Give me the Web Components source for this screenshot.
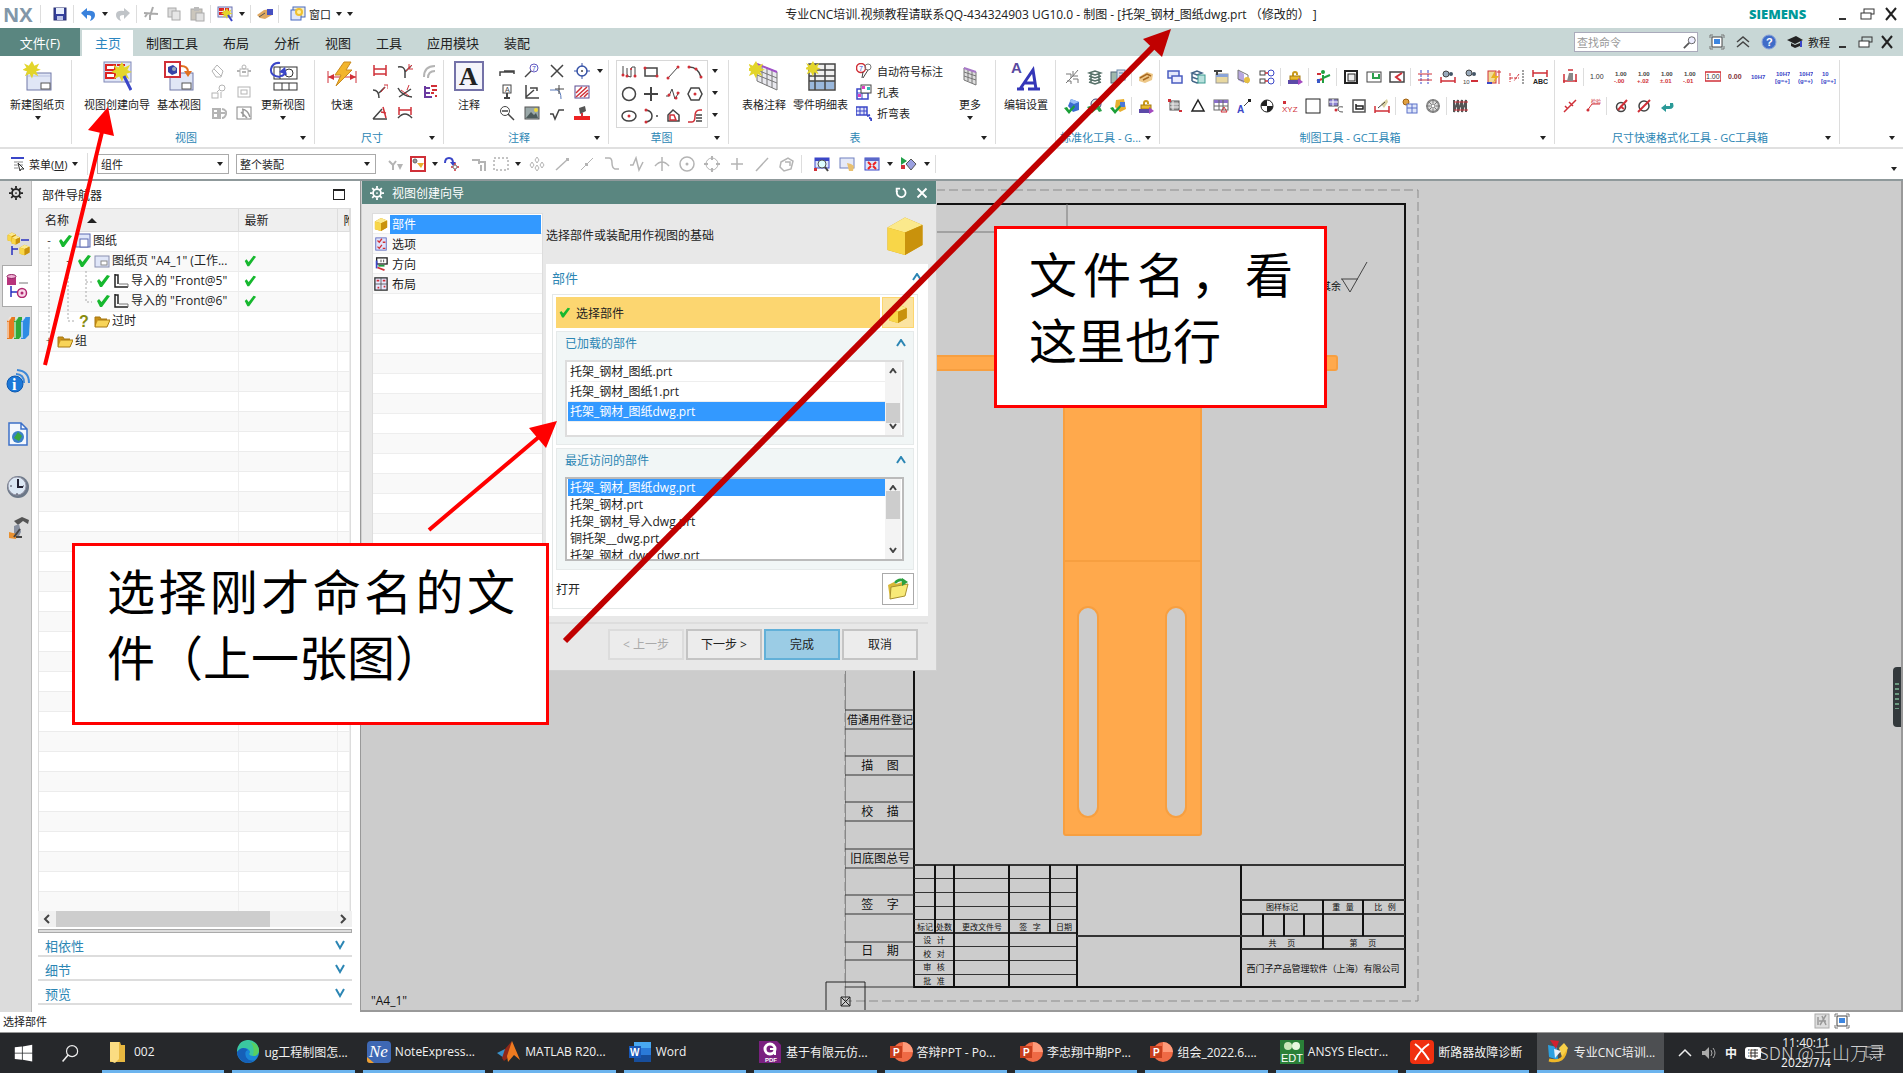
<!DOCTYPE html>
<html lang="zh-CN">
<head>
<meta charset="utf-8">
<title>NX - 制图</title>
<style>
  body {
    margin: 0;
    font-family: "Open Sans", "Noto Sans CJK SC", sans-serif;
    font-size: 12px;
    color: #222;
    overflow: hidden;
  }
</style>
</head>
<body>
<nx-app></nx-app>

<script>
// ---------- icons ----------
const G = '#b4b4b4', K = '#444', R = '#d03038', B = '#3a46c8';
const s = (d, c = K, w = 1, extra = '') => `<path d="${d}" fill="none" stroke="${c}" stroke-width="${w}" ${extra}/>`;
const f = (d, c) => `<path d="${d}" fill="${c}"/>`;
const r = (x, y, w, h, c = 'none', st = 'none', sw = 1) => `<rect x="${x}" y="${y}" width="${w}" height="${h}" fill="${c}" stroke="${st}" stroke-width="${sw}"/>`;
const c = (x, y, q, fill = 'none', st = 'none', sw = 1) => `<circle cx="${x}" cy="${y}" r="${q}" fill="${fill}" stroke="${st}" stroke-width="${sw}"/>`;
const t = (x, y, str, col = K, size = 7, extra = '') => `<text x="${x}" y="${y}" fill="${col}" font-size="${size}" font-family="Liberation Sans, sans-serif" ${extra}>${str}</text>`;
const star = (x, y, q) => f(`M${x} ${y - q}l${q * .3} ${q * .6} ${q * .6}-${q * .3}-${q * .3} ${q * .6} ${q * .5} ${q * .2}-${q * .6} ${q * .2} ${q * .3} ${q * .6}-${q * .6}-${q * .3}-${q * .2} ${q * .6}-${q * .3}-${q * .6}-${q * .6} ${q * .3} ${q * .3}-${q * .6}-${q * .6}-${q * .2} ${q * .5}-${q * .3}-${q * .3}-${q * .5} ${q * .6} ${q * .3}z`, '#e3d52a');
const cube = k => `<g transform="scale(${k})">${f('M1 5 8 1l7 3v8l-7 4-7-2z', '#d8a210')}${f('M1 5l7-4 7 3-7 3z', '#fbe98c')}${f('M1 5l7 2v9l-7-2z', '#f8d648')}${f('M8 7l7-3v8l-7 4z', '#c9920c')}</g>`;
const check = f('M2 8l2-2 2.500 3L12 2l3 1-8 11H5z', '#17b82f');
const lock = f('M5 9V5q0-3 3-3t3 3v1H9V5q0-1-1-1t-1 1v4z', '#c99a1c') + r(3, 7, 10, 4, '#e8b92e', '#a57a10') + r(1, 11, 11, 4, '#5c4aa8') + f('M11 9l5 4-5 3z', '#a34ac0');
const screen = s('M1 4V1h3M12 1h3v3M15 12v3h-3M4 15H1v-3', '#777', 1) + r(3, 3, 10, 10, '#fff', '#444') + r(5, 5, 6, 5, '#3c86e0');
const ppt = c(14, 12, 10, '#ef6a45') + f('M14 2a10 10 0 0 1 10 10H14z', '#ff9b7a') + r(1, 6, 12, 12, '#c8401e') + t(4, 16, 'P', '#fff', 10, 'font-weight="bold"');
const tol = (a, b, cc = K, d = R) => t(2, 7, a, cc, 6, 'font-weight="bold"') + t(1, 14, b, d, 6, 'font-weight="bold"');

const ICONS = {
  save: r(2, 2, 12, 12, '#34409c', '#2a3070') + r(4, 2, 8, 6, '#e8eefc') + r(5, 10, 6, 4, '#bcc4e8'),
  undo: f('M1 7l6-5v3q8-1 8 4 0 4-5 6 2-3 1-5-1-1-4-1v4z', '#3a82dc'),
  redo: f('M15 7L9 2v3q-8-1-8 4 0 4 5 6-2-3-1-5 1-1 4-1v4z', '#c0c4c8'),
  cut: s('M10 1L7 10M1 7l14 1M4 8l-2 3M7 9v5', '#aaa', 2),
  copy: r(2, 2, 8, 9, '#ddd', '#aaa') + r(6, 5, 8, 9, '#e6e6e6', '#aaa'),
  paste: r(2, 3, 11, 11, '#cbc6bc', '#aaa') + r(5, 1, 5, 4, '#bbb') + r(7, 7, 8, 8, '#e2e2e2', '#aaa'),
  wizmini: r(1, 1, 14, 10, '#e8ecfa', '#6a70b0') + r(2, 2, 5, 3, '#d22') + r(8, 2, 4, 3, '#d22') + r(2, 6, 5, 3, '#d22') + star(10, 7, 5) + s('M11 9l4 6', B, 2),
  hand: f('M0 9l7-5 8-1v6l-7 4-5-1z', '#e0a860') + r(10, 3, 6, 6, '#4650c0') + s('M2 11l6-4', '#555'),
  window: r(3, 1, 12, 10, '#f6f0d0', '#4668c0') + r(1, 4, 10, 10, '#dfe6f8', '#4668c0') + c(9, 6, 4, '#f0c030') + c(9, 6, 2, '#fff0a0'),
  min: r(4, 12, 7, 2, '#333'),
  restore: r(5, 3, 10, 5, 'none', '#333') + r(2, 7, 10, 6, '#fff', '#333'),
  close: s('M3 2l10 12M13 2L3 14', '#222', 2),
  screen,
  up2: s('M2 8l6-5 6 5M2 13l6-5 6 5', '#444', 1.500),
  help: c(8, 8, 7, '#3f6cc8', '#8aa2d8') + t(5, 12, '?', '#fff', 11, 'font-weight="bold"'),
  cap: f('M0 6l9-4 7 4-8 4z', '#222') + f('M4 9l4 2 5-2v3l-5 2-4-2z', '#222') + s('M14 7v6', B, 2),
  search: c(10, 6, 4, '#eef', '#555') + s('M7 9l-6 6', '#555', 2),

  newsheet: r(4, 12, 24, 17, '#e0e6f6', '#7078a8') + s('M5 15h22', '#b8c0e0') + r(18, 22, 9, 6, '#fff', '#555') + star(9, 8, 8),
  wizard: r(2, 1, 27, 20, '#dfe5f6', '#8088b8') + r(4, 4, 9, 5, '#fff', '#d22', 2) + r(4, 12, 9, 5, '#fff', '#d22', 2) + s('M15 4h8M15 12h4', '#d22', 2) + star(20, 10, 9) + s('M22 15l7 14', B, 3),
  baseview: r(6, 12, 23, 17, '#e0e6f6', '#7078a8') + r(18, 22, 9, 6, '#fff', '#555') + r(1, 1, 15, 15, '#fff', R, 2) + f('M4 6l5-2 4 3v5l-5 2-4-3z', '#3444a8') + c(10, 8, 2, '#9ab') + s('M17 5q7 0 7 6', '#e07020', 2) + f('M20 10h8l-4 6z', '#e07020'),
  update: r(6, 6, 23, 12, '#fff', '#333') + r(6, 22, 23, 7, '#fff', '#333') + s('M14 22v7M21 22v7M12 6v12', '#333') + c(21, 12, 4, 'none', '#333') + s('M12 16q-10-1-9-8 2-7 9-6', B, 2) + f('M17 6l2 8-8-3z', B) + s('M12 15q5 0 5-5', B, 2),
  v1: s('M1 8l5-6 6 6-2 6H5zM3 6l7 7', G), v2: r(4, 6, 8, 7, 'none', G) + c(8, 4, 2, 'none', G) + s('M1 8h3M12 8h3M6 9h4', G, 2),
  v3: c(11, 4, 3, 'none', G) + r(1, 9, 6, 5, 'none', G) + s('M6 8l3-3M10 8v6', G), v4: r(2, 3, 12, 10, 'none', G) + r(5, 6, 6, 4, 'none', G),
  v5: s('M2 4h5v9H2zM9 3v11M11 4q5 1 4 5t-4 4M2 8h12', G, 2), v6: r(1, 2, 14, 12, 'none', '#888') + s('M6 4q6 1 8 8M5 7l6 6M7 4v8', '#999', 1.500),
  rapid: s('M1 16h28M1 10v12M29 10v12', R, 1) + f('M1 16l6-3v6zM29 16l-6-3v6z', R) + f('M17 1h7l-5 8h6L9 25l5-11H8z', '#f2b52c') + s('M17 1h7l-5 8h6L9 25l5-11H8z', '#c98a20'),
  d1: s('M2 2v11M14 2v11M2 6h12M2 11h12', R, 1.500), d2: s('M1 4q7-1 7 5v6M8 9l6-6', K, 1.500) + s('M9 8l6-6M12 1v5h4', R),
  d3: s('M2 14q0-11 11-11M6 15q0-7 7-7', G, 2), d4: s('M1 6q6 0 6 8M7 9l6-6', K, 1.500) + s('M9 8l4-5M12 1h4v4', R),
  d5: s('M1 4q4 8 14 9M2 13L14 5', K, 1.500) + s('M4 6l8 6M12 1l-2 5', R), d6: s('M3 2v12M3 4h5M3 9h5M3 13h7', '#6a3aa0', 2) + s('M9 2h6M10 6h5M9 9h3M13 12h2', R, 2),
  d7: s('M1 14h14M1 14L10 4', K, 1.500) + s('M11 2l3 11M9 7l5 1', R, 1.500), d8: s('M1 13q7-8 14 0', K, 1.500) + s('M2 2v8M14 2v8M2 5h12', R, 1.500),
  note: r(1, 1, 28, 28, '#f4f4fa', '#7472a8', 2) + t(5, 24, 'A', '#222', 26, 'style="font-family:Liberation Serif" font-weight="bold"'),
  n1: s('M1 13V9h14M5 8h10v3', K, 1.500), n2: c(10, 5, 4, '#fff', '#6258c0') + t(8, 8, '7', B, 7) + s('M7 8l-6 6', K, 1.500), n3: s('M2 2l12 12M14 2L2 14', K, 1.500),
  n4: c(8, 8, 5, 'none', '#3854a8', 1.500) + c(8, 8, 1, K) + s('M8 0v4M8 12v4M0 8h4M12 8h4', '#3854a8'), n5: r(4, 1, 8, 8, 'none', K) + t(6, 8, 'A', K, 7) + s('M8 9v5M5 14h6', K, 2),
  n6: s('M2 1v13h13M2 13l8-7M6 4h7v3', K, 1.500), n7: s('M1 6h7q4 1 4 9', '#5878b8') + s('M10 1v9M6 5h9', K), n8: r(1, 2, 14, 12, '#fff', '#5a4a90') + s('M2 9l6-6M2 13L13 3M6 13l8-7M10 13l4-4', R, 1.500),
  n9: c(6, 6, 4.500, 'none', K) + s('M3 6h6M9 9l6 6', K, 1.500), n10: r(1, 2, 14, 12, '#9aa8a8', '#555') + f('M2 13l5-6 3 3 2-2 2 5z', '#4c5a5a') + c(12, 5, 2, '#f0d838'), n11: s('M1 9h3l2 5 4-9h5', K, 1.500), n12: r(0, 11, 16, 4, '#e22') + f('M5 3l6-2 1 5-6 3z', '#555') + s('M8 8v4', R, 2),
  s1: s('M2 2v8M6 4v6q0 3 4 3V5q0-3 4-2v9', K) + c(2, 11, 1.500, R) + c(6, 12, 1.500, R) + c(10, 5, 1, R) + c(14, 12, 1.500, R), s2: r(2, 4, 12, 8, 'none', K, 1.500) + c(2, 4, 1.500, R) + c(14, 12, 1.500, R), s3: s('M3 14L13 3', K) + c(3, 14, 1.500, R) + c(13, 3, 1.500, R),
  s4: s('M2 3q9 0 12 10', K, 1.500) + c(2, 3, 1.500, R) + c(9, 5, 1.500, R) + c(14, 13, 1.500, R), s5: c(8, 8, 6.500, 'none', K, 1.500), s6: s('M8 1v14M1 8h14', K, 2), s7: s('M1 10h3l3-7 3 10 4-7', K) + c(4, 9, 1.500, R) + c(11, 12, 1.500, R) + c(13, 7, 1.500, R),
  s8: s('M4 2h8l3 6-3 6H4L1 8z', K, 1.500) + c(8, 8, 1.500, R), s9: '<ellipse cx="8" cy="8" rx="7" ry="5" fill="none" stroke="#444" stroke-width="1.500"/>' + c(8, 8, 1.500, R), s10: s('M3 2q6 1 6 6t-6 6', K, 1.500) + c(3, 2, 1.500, R) + c(3, 14, 1.500, R) + c(14, 8, 1, K),
  s11: s('M3 13V7l5-5 6 5v6z', K, 1.500) + s('M5 12V7h4l2 5z', R, 1.500), s12: s('M1 14h4q3 0 3-6t5-6h2', R, 1.500) + s('M9 7h6M9 10h6M9 13h6', K, 1.500),
  tabnote: f('M8 3l20 8v18L8 20z', '#e8e8ee') + s('M8 3l20 8v18L8 20zM8 9l20 8M8 14l20 8M13 5v17M18 7v18M23 9v18', '#777') + s('M8 3l20 8', '#a050c8', 2) + star(7, 8, 8),
  parts: r(3, 3, 26, 26, '#f0f0f0', '#444', 1.500) + r(4, 20, 24, 8, '#9ab8dc') + s('M3 9h26M3 15h26M3 20h26M9 3v26M19 3v26', '#444', 1.500) + star(7, 7, 7),
  l1: c(5, 5, 4.500, '#fff', R, 1.500) + t(3, 8, '7', B, 7) + c(12, 4, 3, 'none', '#777') + s('M7 9l-1 6M12 7l-5 8', K), l2: r(1, 5, 11, 10, '#fff', B, 1.500) + s('M1 9h11M6 5v10', B) + r(5, 1, 10, 8, '#fff', '#444') + r(6, 2, 3, 3, '#e040c0') + r(11, 3, 3, 3, '#30b8b8') + r(2, 10, 3, 3, '#e040c0'), l3: r(0, 2, 11, 8, '#dfe2fa', B, 1.500) + s('M0 6h11M4 2v8M8 2v8', B) + s('M11 11l3-1M13 13q3 0 2 3', B, 2),
  more: f('M9 7l12 4v13L9 19z', '#ddd') + s('M9 7l12 4v13L9 19zM9 11l12 4M9 15l12 4M13 8v12M17 10v12', '#777') + s('M9 7l12 4', '#a878c8', 2),
  editset: t(0, 12, 'A', '#5848a0', 15, 'font-weight="bold"') + s('M6 28h7M17 28h12M9 28L22 9l3 19M14 22h10', '#3436b8', 3),

  g1: s('M2 5h5v4M9 2v5h5M3 12h4v3M9 10h5v4M14 1l-6 7-6 6', '#777', 1), g2: s('M2 4l6-2 6 2-6 2zM2 7l6 2 6-2M2 10l6 2 6-2M2 13l6 2 6-2M4 4v9M12 4v9', '#567068', 1.500), g3: r(1, 3, 9, 11, '#9fb8ac', '#567') + r(7, 1, 8, 10, '#d8dce8', '#68a') + s('M9 4h4M9 7h4', '#58a'),
  g4: f('M1 8l8-5 6 2-1 6-7 3-6-2z', '#eec888') + s('M2 9l7-4 4 2M5 11l6-3', '#a86820', 1.500), g5: f('M7 1l8 3v8l-6 2-5-6z', '#3c6cd0') + f('M7 1l8 3-5 2-4-2z', '#9cc0f8') + f('M0 10l3-1 2 3 5-5 1 2-6 7z', '#1ba038'), g6: c(9, 6, 5, '#dff0e4', '#447') + f('M0 9l3-1 2 3 6-6 4 8-3 1-2-3-5 4z', '#2aa048'), g7: f('M6 2l8-1 2 10-6 3-5-5z', '#e8b030') + r(10, 4, 5, 5, '#4a78d8') + f('M0 10l3-1 2 3 5-5 1 2-6 7z', '#1ba038'), g8: lock,
  h1: r(1, 2, 11, 7, '#e4e8fa', '#4a5cc0', 1.500) + r(5, 7, 10, 7, '#eef', '#4a5cc0', 1.500), h2: s('M2 4l5-2 5 2-5 2zM2 8l5 2 5-2M2 12l5 2 5-2M2 4v8', '#468', 1.500) + r(8, 6, 7, 8, '#b8e0dc', '#3a9a90'), h3: r(3, 5, 12, 9, '#e8d8a0', '#999') + r(3, 5, 12, 3, '#8aa4d8') + s('M1 2h8M4 1v5', K, 2), h4: f('M2 1l6 4v9L2 11z', '#b8a8e0') + s('M2 1l10 5v8L2 10z', '#777') + c(11, 11, 3, '#e8c040'),
  h5: r(1, 2, 5, 4, 'none', K) + r(1, 10, 5, 4, 'none', K) + c(12, 4, 3, 'none', B) + c(12, 12, 3, 'none', B) + s('M6 4h3M6 12h3', R, 1.500), h6: s('M8 14V6M8 9l7-3', '#20a040', 2) + s('M2 12l5-2M2 5h4', R, 2) + c(8, 3, 2, '#20a040') + r(2, 10, 3, 4, '#3858c8'), h7: r(2, 2, 12, 12, 'none', '#222', 2) + r(5, 5, 7, 7, '#eee', '#222'),
  h8: r(1, 3, 14, 10, '#fff', '#444') + s('M7 4v5h6V5', '#2ca04c', 2), h9: r(1, 3, 14, 10, '#fff', '#444', 1.500) + s('M13 4L7 8l5 4', R, 2), h10: s('M4 1v14M11 1v14', B, 1, 'stroke-dasharray="3 1"') + s('M1 5h14M1 11h14', R, 1), h11: c(6, 5, 3, '#9ab', K) + c(11, 5, 2, '#456') + s('M1 8v6M15 8v6M1 12h14', R, 1.500), h12: c(6, 4, 3, '#9ab', K) + c(11, 5, 2, '#456') + t(0, 15, '10', K, 6) + s('M8 12h7', R, 2),
  h13: r(2, 2, 8, 12, '#f0dc98', R) + s('M13 1v14M11 3h4', R) + f('M9 2l-4 7h4l-2 5 6-7H9z', '#e8b020') + s('M1 14h5', B, 2), h14: s('M1 4v9M1 9h9M10 5l-5 7', R, 1, 'stroke-dasharray="3 1"') + s('M14 1v14', K, 1, 'stroke-dasharray="2 1"'), h15: s('M1 1v7M15 1v7M1 4h14', R, 1.500) + t(1, 15, 'ABC', '#222', 7, 'font-weight="bold"'),
  i1: r(3, 3, 9, 9, '#aaa', '#555') + s('M3 6h9M3 9h9M6 3v9', '#eee') + r(1, 1, 3, 3, R) + r(12, 12, 3, 2, R), i2: s('M8 2l6 11H2z', '#222', 1.500), i3: r(1, 2, 14, 10, '#fff', '#666') + r(1, 2, 14, 3, '#8a70c8') + s('M1 8h14M6 2v10M10 2v10', '#666') + s('M11 9l3 5H8z', R), i4: t(1, 15, 'A', B, 10, 'font-weight="bold"') + s('M8 8l6-6', K) + r(12, 1, 3, 3, '#222'), i5: c(8, 8, 6, '#fff', '#222') + f('M8 8V2A6 6 0 0 0 2 8zM8 8v6a6 6 0 0 0 6-6z', '#222'),
  i6: t(0, 14, 'XYZ', R, 8) + r(1, 3, 3, 3, R), i7: r(1, 1, 14, 14, '#fff', '#222'), i8: r(1, 1, 9, 7, '#8a80d0', '#555') + s('M1 4h9M5 1v7', '#fff') + s('M15 9q-5-1-5 2t5 3', '#555') + c(8, 12, 1.500, R), i9: r(2, 2, 12, 12, '#fff', '#555', 1.500) + s('M5 6v5h7v-3H5', '#222', 1.500), i10: s('M1 8v7M15 8v7M1 13h14', R, 1.500) + f('M7 6l6-5 1 3-4 6z', '#d8d0a0') + s('M4 10l7-6', '#444'), i11: c(4, 4, 3, '#e0a040', '#a06010') + r(5, 6, 10, 9, '#dfe6fa', '#5a70c8') + s('M10 6v9M5 10h10', '#5a70c8'),
  i12: c(8, 8, 6, '#ddd', '#888', 2) + s('M8 1v4M8 11v4M1 8h4M11 8h4M3 3l3 3M10 10l3 3M13 3l-3 3M6 10l-3 3', '#777') + c(8, 8, 2, '#fff', '#777'), i13: s('M1 2v12l4-12v12l4-12v12l4-12v12', '#555', 2) + s('M1 4h14M1 12h14', R),
  j1: s('M2 5v9M1 12h14M14 5v8M6 1h5', R, 1.500) + f('M7 4l4 0v8H5z', '#888'),
  j2: t(0, 10, '1.00', '#333', 7), j3: tol('1.00', '-.00'), j4: tol('1.00', '+.02'), j5: tol('1.00', '±.01'), j6: tol('1.00', '-.01'), j7: r(0, 3, 16, 9, '#fff', R, 1.500) + t(1, 10, '1.00', '#333', 7), j8: t(0, 10, '0.00', '#803038', 7, 'font-weight="bold"'),
  j9: t(0, 10, '10H7', B, 6, 'font-weight="bold"'), j10: tol('10H7', '[g=+]', B, B), j11: tol('10H7', '(g=+)', B, B), j12: tol('10', '[g=+]', B, B),
  k1: s('M2 14L14 2M3 8l3 3M7 4l4 4', R, 1.500), k2: s('M2 13l5-7h8', R) + t(6, 5, '检验', R, 5) + c(3, 12, 1.500, R), k3: c(8, 9, 4.500, 'none', K, 1.500) + s('M5 12L14 2M7 8l4 3', R, 2), k4: c(8, 8, 5, 'none', K, 1.500) + s('M2 14L14 2', R, 2), k5: f('M2 10l5-4v2h4V5h3q2 6-4 6H7v3z', '#2a9a98'),

  menu: s('M1 2h13', B, 2) + s('M4 6h9M4 9h9M4 12h6', '#888') + f('M7 6l7 7h-4l-1 3z', '#fff') + s('M8 7l6 6h-3l-1 2z', '#333'),
  q1: s('M1 5l4 4 3-4M5 9v5', G, 2) + f('M9 8h6l-3 6z', G), q2: r(1, 1, 14, 14, '#fff', R, 2) + c(5, 5, 2, '#999', '#666') + f('M7 7h7l-3 5z', '#e8b030'), q3: s('M1 7q0-5 4-5t4 5', B, 2) + f('M6 6h6l-3 4z', B) + s('M11 7v8M7 11h8', R, 1.500) + c(11, 11, 2, '#fff', '#777'), q4: s('M1 4h7v4M8 6h6v9M10 9v6', G, 2), q5: s('M1 2h14v12H1z', '#888', 1, 'stroke-dasharray="2 2"'),
  p1: s('M8 1l2 3-2 3-2-3zM3 6l2 3-2 3-2-3zM13 6l2 3-2 3-2-3zM8 9l2 3-2 3-2-3z', G), p2: s('M2 14L14 3', G, 1.500) + r(12, 2, 3, 3, G), p3: s('M2 14L14 2', G) + r(6, 7, 3, 3, G), p4: s('M1 2h4q3 0 3 5t3 6h4', G, 1.500), p5: s('M1 9h3l3-7 3 12 4-8', G, 1.500), p6: s('M8 1v14M1 10q7-8 14 0', G, 1.500), p7: c(8, 8, 7, 'none', G, 1.500) + c(8, 8, 1.500, G), p8: c(8, 8, 6, 'none', G) + s('M8 0v4M8 12v4M0 8h4M12 8h4', G, 2), p9: s('M8 2v12M2 8h12', G, 1.500), p10: s('M2 15L14 2', G, 1.500), p11: s('M2 6l7-4 5 3-2 8-7 2-4-4zM6 6h5v4', G, 1.500),
  o1: r(1, 2, 14, 10, '#dde6fa', B) + r(1, 2, 14, 3, B) + c(8, 8, 4, '#dff', '#555') + s('M11 11l3 4', K, 2) + r(0, 12, 3, 3, R), o2: r(1, 2, 14, 10, '#e6eaf8', '#7080c0') + f('M8 7l4 1 3 2-1 5h-4z', '#e8c070'), o3: r(1, 2, 14, 12, '#dde6fa', B) + r(1, 2, 14, 3, '#5a68c8') + s('M4 6l3 3M12 6l-3 3M4 13l3-3M12 13l-3-3', '#e22', 2), o4: f('M0 1l6 4-6 4z', '#20a048') + r(0, 9, 4, 4, R) + f('M10 3l5 5-5 6-5-6z', '#9aa0e0') + s('M10 3l5 5-5 6-5-6z', '#555'),

  gear: c(8, 8, 4.500, 'none', 'currentColor', 2) + s('M8 0v3M8 13v3M0 8h3M13 8h3M2.500 2.500l2 2M11.500 11.500l2 2M13.500 2.500l-2 2M4.500 11.500l-2 2', 'currentColor', 2) + c(8, 8, 1, 'currentColor'),
  asm: `<g transform="translate(1 0)">${cube(.6)}</g><g transform="translate(5 3)">${cube(.6)}</g><g transform="translate(13 12)">${cube(.7)}</g>` + s('M6 14v9M6 17h6M15 8h8', '#2830c0', 1.500),
  navtab: r(1, 2, 9, 9, '#b8347c') + '<ellipse cx="5.500" cy="2.500" rx="4.500" ry="2" fill="#f0b0d4" stroke="#902060"/>' + s('M5 12v11M5 18h6', '#2830c0', 1.500) + s('M13 9h9', '#777') + c(16, 19, 4.500, '#f8d8e8', '#b02870', 1.500) + c(16, 19, 1.500, '#b02870'),
  books: f('M1 5l4-4h4v18l-3 4H1z', '#e87820') + f('M8 5l4-4h4v18l-3 4H8z', '#30a838') + f('M15 5l4-4h5l-1 18-4 4h-4z', '#2e8ce4') + s('M2 6v16M9 6v16M16 6v16M5 1L2 5M12 1L9 5M19 1l-3 4', '#fffa', 1.500),
  info: c(9, 15, 8, '#1c78d8', '#0c58b0') + t(6, 21, 'i', '#fff', 16, 'font-weight="bold" style="font-family:Liberation Serif"') + s('M10 5q8 0 8 9M11 1q12 1 12 13', '#3c88d8', 2),
  page: f('M3 1h12l6 6v16H3z', '#f4f8fe') + s('M3 1h12l6 6v16H3zM15 1v6h6', '#3c70c8', 1.500) + c(12, 15, 6, '#3a80c8') + f('M8 16l4-6 4 4-3 5z', '#3aa840'),
  clock: c(12, 12, 11, '#6c7888') + c(11, 11, 9, '#dce8f4', '#99a') + s('M12 4v8h5', '#223', 2) + s('M4 11h2M17 11h1M11 18v2', '#445'),
  robot: f('M8 4l8-4 7 3-1 4-5-3-5 4z', '#555') + f('M8 9l5-2 2 8-3 6H5l3-5z', '#8890a0') + f('M3 15l8 2-1 5-7-1z', '#e89030') + s('M14 12l-6 8M10 20h6', '#444', 2),
  tick: check,
  sheet: r(1, 1, 14, 13, '#dfe6fa', '#5a68b0') + r(5, 6, 8, 8, '#fff', '#5a68b0'),
  sheet2: r(1, 3, 14, 11, '#e0e6f8', '#8a90b0') + r(7, 8, 6, 4, '#fff', '#888'),
  view: s('M2 1v13h13M2 2h3v9', '#222', 1.500) + s('M6 11h9v3', '#777'),
  quest: t(3, 14, '?', '#888c10', 16, 'font-weight="bold"'),
  folder: f('M1 4h5l1 2h6v8H1z', '#c89018') + f('M4 7h12l-3 7H1z', '#f8d458') + s('M4 7h12l-3 7H1V4h5l1 2h6', '#a87810'),
  cube: cube(1),
  opts: r(2, 1, 12, 14, '#dfe2fa', '#5a68c0') + s('M4 4l2 2 3-4M4 11l2 2 3-4M10 6h3M10 13h3', R, 1.500),
  orient: r(3, 1, 12, 7, '#fff', '#222', 1.500) + s('M8 3v3M11 3v3', K) + s('M3 4v9', B, 2) + s('M5 10h7', '#20a040', 2) + s('M4 12l8 3', R, 2),
  layout: r(1, 1, 14, 14, '#e8eaff', '#333', 1.500) + s('M1 8h14M8 1v14', '#555') + s('M3 4h3M10 4h3M4 12h2M11 11h2', R, 2),
  reset: s('M10 3a5 5 0 1 1-6 2M7 3H3v4', 'currentColor', 2),
  x: s('M2 2l12 12M14 2L2 14', 'currentColor', 2.500),
  openf: f('M2 8l6-3 2 2 9-3v14L4 22z', '#d8b838') + f('M5 10l17-3-3 12-15 3z', '#f8ea78') + s('M5 10l17-3-3 12-15 3z', '#a89030') + s('M9 6q4-5 9-2', '#2ca040', 2.500) + f('M16 1l6 4-6 4z', '#2ca040'),
  scr2: r(1, 1, 14, 14, '#ddd', '#aaa') + s('M4 4v8M8 3l4 9M5 8h7M12 2L6 12', '#999', 1.500),

  win: f('M1 4l9-1v8H1zM11 3l12-2v10H11zM1 12h9v8l-9-1zM11 12h12v10l-12-2z', '#fff'),
  lens: c(14, 9, 7, 'none', '#eee', 1.500) + s('M9 14l-7 8', '#eee', 2),
  tfolder: f('M4 2h10l1 3h4v17H4z', '#e8b840') + f('M4 2h9v17l-4 4-5-2z', '#fbdc82'),
  edge: c(12, 12, 11, '#1a86d8') + f('M1 12a11 11 0 0 1 22-2q0 6-6 6-3 0-4-2 2-2 0-4-4-5-12 2z', '#3ac8a0') + f('M1 12q5-7 11-2-4 1-2 7 3 5 9 3-8 6-14 0-4-4-4-8z', '#1560b8') + f('M14 2q9 2 9 9-1 5-6 5 2-10-3-14z', '#58d060'),
  ne: `<rect x="0" y="1" width="24" height="22" rx="4" fill="#3e68b4"/>` + t(2, 17, 'Ne', '#fff', 17, 'style="font-family:Liberation Serif" font-style="italic"') + f('M0 17l7 6H3q-3 0-3-3z', '#f0a030'),
  matlab: f('M0 13l8-4 4 4-5 5z', '#3a90c8') + f('M8 9l7-8-3 16-5 4-2-3z', '#902818') + f('M15 1l8 19-6-5-6 7-1-6z', '#ee7a20'),
  word: r(6, 2, 17, 20, '#2a7ad8') + r(6, 2, 17, 6, '#48a8f0') + r(6, 15, 17, 7, '#174e9c') + r(1, 6, 12, 12, '#1858b8') + t(2, 16, 'W', '#fff', 10, 'font-weight="bold"'),
  pdf: f('M1 1h18l4 4v18H1z', '#7a2080') + c(12, 9, 5, 'none', '#fff', 3) + s('M12 9h5v6', '#fff', 2) + t(7, 22, 'PDF', '#fff', 6, 'font-weight="bold"'),
  ppt,
  edt: r(0, 0, 24, 24, '#2a8038') + c(8, 6, 4, '#c8e8b8') + c(16, 6, 4, '#e8f8e0') + t(1, 22, 'EDT', '#fff', 11),
  xm: `<rect x="0" y="0" width="24" height="24" rx="4" fill="#f03010"/>` + s('M5 4q7 5 14 16M19 4Q10 10 5 20', '#fff', 2),
  nx: f('M2 5l9 2 1 13-9-3z', '#2ca0e0') + f('M4 0l9 1-3 8z', '#d02030') + s('M3 20q16 4 17-12', '#f0b828', 3) + f('M13 8l5-5 4 5-6 9z', '#f8d048') + f('M8 9l7 2-6 7z', '#e8f0f8'),
  tup: s('M2 11l6-6 6 6', '#eee', 1.500), vol: f('M1 6h3l4-4v12L4 10H1z', '#aaa') + s('M10 5q2 3 0 6M12 3q4 5 0 10', '#aaa'),
  ime: `<rect x="0" y="2" width="16" height="12" rx="3" fill="#fff"/>` + s('M3 5h10M3 8h10M3 11h10M6 4v9M10 4v9', '#333'),
  bell: s('M1 2h14v10H9l-3 3v-3H1z', '#bbb', 1)
};
const BIG = 'newsheet wizard baseview update rapid note tabnote parts more editset'.split(' ');
const MID = 'asm navtab books info page clock robot openf win lens tfolder edge ne matlab word pdf ppt edt xm nx'.split(' ');

function icon(name, size) {
  const box = BIG.includes(name) ? 30 : MID.includes(name) ? 24 : 16;
  size = size || box;
  return `<svg class="icon" aria-hidden="true" width="${size}" height="${size}" viewBox="0 0 ${box} ${box}">${ICONS[name]}</svg>`;
}

// shared by every shadow root
const BASE = `
  * { box-sizing: border-box; }
  button { font: inherit; color: inherit; background: none; border: 0; padding: 0; margin: 0; cursor: pointer; }
  .icon { display: block; flex: none; }
  .caret { display: block; width: 0; height: 0; border: 3px solid transparent; border-top: 4px solid #222; border-bottom: 0; }
  .sep { width: 1px; align-self: stretch; background: #ddd; margin: 0 2px; }
`;

function define(name, css, html) {
  customElements.define(name, class extends HTMLElement {
    constructor() {
      super();
      this.attachShadow({ mode: 'open' });
    }
    connectedCallback() {
      const body = typeof html === 'function' ? html(this) : html;
      this.shadowRoot.innerHTML = `<style>${BASE}${css}</style>${body}`;
    }
  });
}

// strip of small tool buttons: "|" separator, "v" drop-down arrow, "_" gap
define('nx-tools', `
  :host { display: block; }
  .row { display: flex; align-items: center; height: var(--row, 22px); }
  .row button { width: var(--cell, 23px); display: flex; justify-content: center; }
  .row .drop { width: 12px; }
  .sep { height: 18px; align-self: center; }
  .gap { width: 5px; }
`, el => el.getAttribute('icons').split('/').map(line => `<div class="row">${line.trim().split(/\s+/).map(n =>
    n === '|' ? '<span class="sep"></span>' :
    n === '_' ? '<span class="gap"></span>' :
    n === 'v' ? '<button class="drop" aria-label="更多选项"><span class="caret"></span></button>' :
    `<button aria-label="${n}">${icon(n)}</button>`).join('')}</div>`).join(''));

define('nx-big-button', `
  :host { display: block; }
  button { display: flex; flex-direction: column; align-items: center; min-width: 50px; padding: 1px 2px 0; font-size: 11px; line-height: 16px; white-space: nowrap; }
  .label { margin: 6px 0 3px; }
`, el => `<button>${icon(el.getAttribute('icon'))}<span class="label"><slot></slot></span>${el.hasAttribute('drop') ? '<span class="caret"></span>' : ''}</button>`);

define('nx-group', `
  :host { display: flex; flex-direction: column; border-right: 1px solid #ddd; }
  .body { display: flex; height: 70px; gap: var(--gap, 2px); padding-left: var(--pad, 0); }
  .foot { display: flex; align-items: center; height: 14px; padding: 2px 8px 0 0; }
  .label { flex: 1; text-align: center; color: #2c86b4; font-size: 11px; line-height: 14px; white-space: nowrap; }
`, el => `<div class="body"><slot></slot></div><div class="foot"><span class="label">${el.getAttribute('label') || ''}</span>${el.hasAttribute('nodrop') ? '' : '<span class="caret"></span>'}</div>`);

define('nx-title-bar', `
  :host { display: flex; align-items: center; height: 28px; background: #fff; }
  .logo { font: bold 20px "Open Sans", sans-serif; color: #8297a9; width: 38px; padding-left: 3px; }
  .win { font-size: 11px; display: flex; align-items: center; gap: 5px; }
  .title { flex: 1; text-align: center; white-space: nowrap; }
  .brand { font: 800 13px "Open Sans", sans-serif; color: #009999; width: 82px; }
  .ctl { --cell: 24px; }
`, `
  <span class="logo">NX</span>
  <nx-tools icons="| _ save | undo v redo | cut copy paste | wizmini v | hand | _ window"></nx-tools>
  <button class="win">窗口 <span class="caret"></span> <span class="caret"></span></button>
  <span class="title">专业CNC培训.视频教程请联系QQ-434324903 UG10.0 - 制图 - [托架_钢材_图纸dwg.prt （修改的） ]</span>
  <span class="brand">SIEMENS</span>
  <nx-tools class="ctl" icons="min restore close"></nx-tools>
`);

define('nx-tab-bar', `
  :host { display: flex; align-items: flex-end; height: 28px; background: #c8d7d6; font-size: 13px; }
  nav { display: flex; flex: 1; align-items: flex-end; }
  button { height: 26px; padding: 0 12px 2px 13px; white-space: nowrap; }
  .file { height: 28px; width: 80px; padding: 0; background: #5a8680; color: #fff; margin-right: 2px; }
  .on { background: #fff; color: #2c86c0; }
  .find { display: flex; align-items: center; width: 124px; height: 20px; background: #fff; border: 1px solid #aab; margin: 0 6px 4px 0; }
  .find input { flex: 1; min-width: 0; border: 0; outline: 0; padding: 0 2px; font: inherit; font-size: 11px; }
  .find input::placeholder { color: #999; }
  .tail { display: flex; align-items: center; height: 28px; font-size: 11px; }
  nx-tools { --cell: 26px; }
  .ctl { --cell: 22px; padding: 0 5px 0 2px; }
`, `
  <nav>
    <button class="file">文件(F)</button><button class="on">主页</button><button>制图工具</button><button>布局</button><button>分析</button><button>视图</button><button>工具</button><button>应用模块</button><button>装配</button>
  </nav>
  <label class="find"><input type="text" placeholder="查找命令" aria-label="查找命令">${icon('search', 14)}</label>
  <div class="tail"><nx-tools icons="screen up2 help cap"></nx-tools><span>教程</span><nx-tools class="ctl" icons="min restore close"></nx-tools></div>
`);

define('nx-ribbon', `
  :host { display: flex; background: #fff; padding: 4px 0 3px; border-bottom: 2px solid #e0e0e0; }
  .three { --row: 21px; --cell: 25px; }
  .two { --row: 29px; padding-top: 2px; }
  .tight { --gap: 0px; }
  .gallery { --row: 22px; --cell: 22px; border: 1px solid #d8d8d8; height: 68px; padding: 0 1px; }
  .scroll { display: flex; flex-direction: column; justify-content: space-around; height: 66px; padding-left: 4px; }
  .list { display: flex; flex-direction: column; padding-left: 4px; font-size: 11px; }
  .list button { display: flex; align-items: center; gap: 5px; height: 21px; white-space: nowrap; }
  .more { margin-left: auto; }
`, `
  <nx-group nodrop style="width:72px;--pad:8px"><nx-big-button icon="newsheet" drop>新建图纸页</nx-big-button></nx-group>
  <nx-group label="视图" style="width:243px;--pad:10px">
    <nx-big-button icon="wizard">视图创建向导</nx-big-button>
    <nx-big-button icon="baseview">基本视图</nx-big-button>
    <nx-tools class="three" icons="v1 v2 / v3 v4 / v5 v6"></nx-tools>
    <nx-big-button icon="update" drop>更新视图</nx-big-button>
  </nx-group>
  <nx-group label="尺寸" class="tight" style="width:129px;--pad:2px">
    <nx-big-button icon="rapid">快速</nx-big-button>
    <nx-tools class="three" icons="d1 d2 d3 / d4 d5 d6 / d7 d8"></nx-tools>
  </nx-group>
  <nx-group label="注释" class="tight" style="width:165px">
    <nx-big-button icon="note">注释</nx-big-button>
    <nx-tools class="three" icons="n1 n2 n3 n4 v / n5 n6 n7 n8 / n9 n10 n11 n12"></nx-tools>
  </nx-group>
  <nx-group label="草图" class="tight" style="width:120px;--pad:7px">
    <nx-tools class="gallery" icons="s1 s2 s3 s4 / s5 s6 s7 s8 / s9 s10 s11 s12"></nx-tools>
    <div class="scroll"><span class="caret"></span><span class="caret"></span><span class="caret"></span></div>
  </nx-group>
  <nx-group label="表" style="width:267px;--pad:10px">
    <nx-big-button icon="tabnote">表格注释</nx-big-button>
    <nx-big-button icon="parts">零件明细表</nx-big-button>
    <div class="list">
      <button>${icon('l1')}自动符号标注</button>
      <button>${icon('l2')}孔表</button>
      <button>${icon('l3')}折弯表</button>
    </div>
    <nx-big-button class="more" icon="more" drop>更多</nx-big-button>
  </nx-group>
  <nx-group nodrop style="width:60px;--pad:5px"><nx-big-button icon="editset">编辑设置</nx-big-button></nx-group>
  <nx-group label="标准化工具 - G..." style="width:104px;--pad:4px">
    <nx-tools class="two" icons="g1 g2 g3 | g4 / g5 g6 g7 | g8"></nx-tools>
  </nx-group>
  <nx-group label="制图工具 - GC工具箱" style="width:395px;--pad:3px">
    <nx-tools class="two" icons="h1 h2 h3 h4 h5 | g8 | h6 | h7 h8 h9 | h10 h11 h12 h13 h14 h15 / i1 i2 i3 i4 i5 i6 i7 i8 i9 i10 | i11 i12 | i13"></nx-tools>
  </nx-group>
  <nx-group label="尺寸快速格式化工具 - GC工具箱" style="width:285px;--pad:3px">
    <nx-tools class="two" icons="j1 | j2 j3 j4 j5 j6 j7 j8 j9 j10 j11 j12 / k1 k2 | k3 k4 k5"></nx-tools>
  </nx-group>
  <nx-group style="flex:1;border:0"></nx-group>
`);

define('nx-selection-bar', `
  :host { display: flex; align-items: center; height: 32px; background: #fff; border-bottom: 2px solid #8f999b; font-size: 11px; padding-left: 10px; }
  .menu { display: flex; align-items: center; gap: 3px; width: 75px; white-space: nowrap; }
  .menu .caret { margin-left: 2px; }
  .combo { position: relative; margin-left: 7px; }
  .combo select { display: block; appearance: none; width: 132px; height: 20px; border: 1px solid #aaa; background: #fff; font: inherit; color: inherit; padding: 0 3px; border-radius: 0; }
  .combo.wide select { width: 140px; }
  .combo .caret { position: absolute; right: 6px; top: 8px; pointer-events: none; }
  .a { --cell: 22px; margin-left: 9px; }
  .b { --cell: 25px; flex: 1; }
  .end { margin: 10px 6px 0 0; }
`, `
  <button class="menu">${icon('menu')}<span>菜单(<u>M</u>)</span><span class="caret"></span></button>
  <span class="sep" style="margin-top:4px;margin-bottom:4px"></span>
  <span class="combo"><select aria-label="类型过滤器"><option>组件</option></select><span class="caret"></span></span>
  <span class="combo wide"><select aria-label="选择范围"><option>整个装配</option></select><span class="caret"></span></span>
  <nx-tools class="a" icons="q1 q2 v q3 _ q4 q5 v"></nx-tools>
  <nx-tools class="b" icons="p1 p2 p3 p4 p5 p6 p7 p8 p9 p10 p11 | _ o1 o2 o3 v o4 v |"></nx-tools>
  <span class="caret end"></span>
`);

define('nx-resource-rail', `
  :host { display: flex; flex-direction: column; width: 32px; background: #dcdcdc; border-right: 1px solid #bbb; }
  button { display: flex; align-items: center; justify-content: center; height: 42px; padding-left: 4px; flex: none; }
  .gear { height: 24px; margin-bottom: 18px; padding: 0; }
  .on { background: #fff; border: 1px solid #aaa; border-right: 0; margin: 0 -1px 0 2px; padding-left: 1px; }
  .gap { margin-top: 11px; }
`, `
  <button class="gear" aria-label="资源条选项">${icon('gear', 14)}</button>
  <button aria-label="装配导航器">${icon('asm')}</button>
  <button class="on" aria-label="部件导航器">${icon('navtab')}</button>
  <button aria-label="重用库">${icon('books')}</button>
  <button class="gap" aria-label="HD3D 工具">${icon('info')}</button>
  <button class="gap" aria-label="Web 浏览器">${icon('page')}</button>
  <button class="gap" aria-label="历史记录">${icon('clock')}</button>
  <button aria-label="角色">${icon('robot')}</button>
`);

const treeRow = (level, toggle, icons, text, ok) => `<tr><td><span class="node" style="padding-left:${4 + level * 19}px"><i class="tg">${toggle}</i>${icons.map(n => icon(n)).join('')}<span>${text}</span></span></td><td>${ok ? icon('tick', 14) : ''}</td><td></td></tr>`;

define('nx-part-navigator', `
  :host { display: flex; flex-direction: column; width: 328px; background: #fff; padding: 0 8px 7px 6px; }
  header { display: flex; align-items: center; justify-content: space-between; height: 27px; padding: 0 7px 0 4px; flex: none; }
  header button { width: 12px; height: 11px; border: 1px solid #222; border-top-width: 2px; }
  .box { position: relative; flex: 1; min-height: 0; overflow: hidden; border: 1px solid #ddd; border-bottom: 0; margin-right: 1px; }
  table { width: 100%; border-collapse: collapse; table-layout: fixed; }
  tr { height: 20px; }
  th { background: #efefef; text-align: left; font-weight: normal; padding: 0 0 0 6px; border-right: 1px solid #ddd; border-bottom: 1px solid #ddd; height: 22px; overflow: hidden; white-space: nowrap; }
  td { height: 20px; padding: 0; border-right: 1px solid #eee; border-bottom: 1px solid #ececec; line-height: 18px; }
  td + td { padding-left: 4px; }
  tbody tr:nth-child(even) { background: #f9f9f9; }
  .node { display: flex; align-items: center; gap: 2px; white-space: nowrap; height: 19px; }
  .tg { width: 12px; height: 14px; font-style: normal; color: #333; font-size: 11px; line-height: 12px; text-align: center; }
  .up { display: inline-block; border: 5px solid transparent; border-top: 0; border-bottom-color: #222; margin: 0 0 2px 18px; }
  .lines { position: absolute; left: 0; top: 0; }
  .scroll { display: flex; align-items: center; height: 16px; background: #f0f0f0; flex: none; gap: 5px; padding: 0 5px; margin-bottom: 2px; }
  .thumb { width: 214px; height: 16px; background: #cdcdcd; }
  .arrow { width: 8px; }
  .thumb + .arrow { margin-left: auto; }
  .bar { height: 4px; border: 1px solid #aaa; background: #ddd; flex: none; }
  .sect { display: flex; align-items: center; justify-content: space-between; height: 24px; color: #2c86b4; border-bottom: 2px solid #ddd; padding: 2px 6px 0 7px; font-size: 13px; flex: none; text-align: left; }
`, () => `
  <header><span>部件导航器</span><button aria-label="最大化"></button></header>
  <div class="box">
    <table>
      <colgroup><col style="width:199px"><col style="width:99px"><col></colgroup>
      <thead><tr><th>名称<span class="up"></span></th><th>最新</th><th>附</th></tr></thead>
      <tbody>
        ${treeRow(0, '-', ['tick', 'sheet'], '图纸')}
        ${treeRow(1, '-', ['tick', 'sheet2'], '图纸页 "A4_1" (工作...', true)}
        ${treeRow(2, '', ['tick', 'view'], '导入的 "Front@5"', true)}
        ${treeRow(2, '', ['tick', 'view'], '导入的 "Front@6"', true)}
        ${treeRow(1, '', ['quest', 'folder'], '过时')}
        ${treeRow(0, '+', ['folder'], '组')}
        ${'<tr><td></td><td></td><td></td></tr>'.repeat(30)}
      </tbody>
    </table>
    <svg class="lines" width="60" height="140" aria-hidden="true"><path d="M10 38v87M29 60v52h8M47 62v31h6M47 73h6" fill="none" stroke="#aaa" stroke-dasharray="2 2"/></svg>
  </div>
  <div class="scroll"><svg class="arrow" height="10"><path d="M6 1L2 5l4 4" fill="none" stroke="#444" stroke-width="2"/></svg><span class="thumb"></span><svg class="arrow" height="10"><path d="M2 1l4 4-4 4" fill="none" stroke="#444" stroke-width="2"/></svg></div>
  <div class="bar"></div>
  ${['相依性', '细节', '预览'].map(x => `<button class="sect">${x}<svg width="12" height="10"><path d="M2 1l4 7 4-7" fill="none" stroke="#2c86b4" stroke-width="2"/></svg></button>`).join('')}
`);

const hl = (x1, x2, ys, w) => s(ys.map(y => `M${x1} ${y}H${x2}`).join(''), '#333', w);
const vl = (y1, y2, xs, w) => s(xs.map(x => `M${x} ${y1}V${y2}`).join(''), '#111', w);
const tx = (x, y, str, size = 9) => `<text x="${x}" y="${y}" font-size="${size}" xml:space="preserve">${str}</text>`;

define('nx-drawing-sheet', `
  :host { display: block; overflow: hidden; background: #ccc; }
  svg { display: block; }
  text { text-anchor: middle; fill: #111; font-family: "Noto Sans CJK SC", sans-serif; white-space: pre; }
`, () => `
  <svg width="1540" height="829" viewBox="361 181 1540 829">
    <rect x="845" y="190" width="573" height="811" fill="none" stroke="#8c8c8c" stroke-dasharray="9 4"/>
    <rect x="914" y="204" width="491" height="783" fill="none" stroke="#111" stroke-width="2"/>
    <path d="M914 232H1067V204" fill="none" stroke="#777"/>
    <path d="M845.500 670V1001" fill="none" stroke="#888"/>
    ${hl(845, 914, [710, 729, 756, 775, 802, 821, 849, 868, 895, 914, 942, 960, 987], 1)}
    ${tx(880, 724, '借通用件登记', 11)}${tx(880, 770, '描     图', 12)}${tx(880, 816, '校     描', 12)}
    ${tx(880, 863, '旧底图总号', 12)}${tx(880, 909, '签     字', 12)}${tx(880, 955, '日     期', 12)}
    ${hl(914, 1405, [865], 2)}
    ${hl(914, 1077, [878.500, 892.500, 906.500, 919.500, 946.500, 960.500, 974.500], 1)}${hl(914, 1077, [933], 2)}
    ${vl(865, 933, [935, 1050], 2)}${vl(865, 987, [954, 1009, 1077, 1241], 2)}
    ${hl(1077, 1405, [936], 2)}${hl(1241, 1405, [900, 914, 949], 2)}
    ${vl(900, 949, [1323], 2)}${vl(900, 936, [1363], 2)}${vl(914, 936, [1263, 1284, 1304], 2)}
    ${tx(925, 930, '标记', 8)}${tx(944, 930, '处数', 8)}${tx(982, 930, '更改文件号', 8)}${tx(1030, 930, '签   字', 8)}${tx(1064, 930, '日期', 8)}
    ${tx(934, 943, '设   计', 8)}${tx(934, 957, '校   对', 8)}${tx(934, 970, '审   核', 8)}${tx(934, 984, '批   准', 8)}
    ${tx(1282, 910, '图样标记', 8)}${tx(1343, 910, '重   量', 8)}${tx(1385, 910, '比   例', 8)}
    ${tx(1282, 946, '共      页', 8)}${tx(1363, 946, '第      页', 8)}
    ${tx(1323, 972, '西门子产品管理软件（上海）有限公司', 9)}
    <path d="M826 1010V982H865V1010" fill="none" stroke="#222"/>
    <path d="M841 997h9v9h-9zM841 997l9 9M850 997l-9 9" fill="none" stroke="#222"/>
    <g fill="#ffa94c" stroke="#f79f40" stroke-width="2">
      <rect x="926" y="356" width="411" height="14" rx="2"/>
      <path d="M1064 370V833q0 2 2 2H1199q2 0 2-2V370M1064 561H1201"/>
      <rect x="1078" y="607" width="20" height="210" rx="10" fill="#ccc"/>
      <rect x="1166" y="607" width="20" height="210" rx="10" fill="#ccc"/>
    </g>
    <path d="M1341 279h17M1342 279l8 13 17-30" fill="none" stroke="#444"/>
    ${tx(1331, 290, '其余', 10)}
    <text x="371" y="1005" style="text-anchor:start;font-family:Open Sans" font-size="12">"A4_1"</text>
    <rect x="1893" y="667" width="12" height="60" rx="4" fill="#33393c"/>
    <path d="M1897 683v26" stroke="#6c9a80" stroke-width="4" stroke-dasharray="2 3"/>
  </svg>
`);

define('nx-list-box', `
  :host { display: flex; background: #fff; border: 2px solid #ddd; padding: 0 1px; overflow: hidden; }
  ul { list-style: none; margin: 0; padding: 0; flex: 1; overflow: hidden; }
  li { height: var(--item, 20px); line-height: var(--item, 20px); padding-left: 2px; white-space: nowrap; }
  :host([lined]) li { border-bottom: 1px solid #eee; line-height: 19px; }
  li.on { background: #3399ff; color: #fff; }
  .bar { width: 16px; display: flex; flex-direction: column; justify-content: space-between; align-items: center; background: #f3f3f3; padding: 6px 0; }
  .thumb { width: 14px; background: #cdcdcd; }
`, el => {
  const on = Number(el.getAttribute('selected'));
  const items = el.getAttribute('items').split('|');
  const [a, b, c2] = el.getAttribute('thumb').split(' ');
  return `<ul role="listbox">${items.map((x, i) => `<li role="option" class="${i === on ? 'on' : ''}" aria-selected="${i === on}">${x}</li>`).join('')}</ul>
    <div class="bar"><svg width="8" height="6"><path d="M1 5l3-4 3 4" fill="none" stroke="#444" stroke-width="2"/></svg>
    <span style="flex:${a}"></span><span class="thumb" style="flex:${b}"></span><span style="flex:${c2}"></span>
    <svg width="8" height="6"><path d="M1 1l3 4 3-4" fill="none" stroke="#444" stroke-width="2"/></svg></div>`;
});

const fold = '<svg width="10" height="8"><path d="M1 7l4-6 4 6" fill="none" stroke="#2c86b4" stroke-width="2"/></svg>';

define('nx-view-wizard', `
  :host { display: flex; flex-direction: column; width: 576px; background: #e8e8e8; border: 1px solid #d0d0d0; border-top: 0; }
  header { display: flex; align-items: center; gap: 8px; height: 23px; background: #5a8680; color: #fff; padding: 0 8px; }
  header span { flex: 1; }
  .body { display: flex; gap: 3px; padding: 9px 8px 0 10px; height: 412px; }
  .steps { width: 171px; list-style: none; margin: 0; padding: 0 1px; background: repeating-linear-gradient(#fff 0 19px, #eee 19px 20px, #f9f9f9 20px 39px, #eee 39px 40px); border: 1px solid #ddd; }
  .steps li { display: flex; align-items: center; gap: 2px; height: 20px; }
  .steps span { flex: 1; padding-left: 2px; line-height: 19px; }
  .steps .on { background: #3399ff; color: #fff; }
  .page { flex: 1; display: flex; flex-direction: column; }
  .intro { display: flex; align-items: center; justify-content: space-between; height: 51px; padding: 0 3px 8px 0; }
  .panel { flex: 1; background: #fff; padding: 0 6px 7px; display: flex; flex-direction: column; }
  .head { display: flex; align-items: center; justify-content: space-between; color: #2c86b4; }
  .panel > .head { font-size: 13px; height: 30px; padding: 0 0 4px; }
  .inner { flex: 1; border: 1px solid #e4e8e8; margin-right: 4px; padding: 2px 3px 0; display: flex; flex-direction: column; gap: 3px; }
  .pick { display: flex; gap: 2px; height: 31px; }
  .pick .text { flex: 1; display: flex; align-items: center; gap: 5px; background: #fcd670; padding-left: 2px; }
  .pick button { width: 32px; background: #fbe3a0; border: 1px solid #fcd670; display: flex; align-items: center; justify-content: center; }
  .sub { background: #f1f6f6; border: 1px solid #e6eaea; padding: 0 5px 7px 8px; }
  .sub .head { height: 28px; padding: 0 2px 6px 0; }
  .sub nx-list-box { margin-right: 4px; }
  .one { height: 77px; }
  .two { height: 84px; --item: 17px; border-color: #bbb; }
  .sub + .sub { height: 122px; }
  .open { display: flex; align-items: center; justify-content: space-between; height: 32px; }
  .open button { width: 32px; height: 32px; border: 1px solid #aaa; background: #fff; display: flex; align-items: center; justify-content: center; }
  footer { display: flex; justify-content: flex-end; gap: 2px; margin: 6px 8px 0; padding: 5px 10px 10px; border-top: 2px solid #ddd; }
  footer button { width: 76px; height: 31px; border: 2px solid #c4c4c4; background: #ececec; padding-bottom: 2px; }
  footer button:disabled { color: #aaa; border-color: #dcdcdc; }
  footer .go { background: #9bcce5; border-color: #62b0d8; }
`, () => `
  <header>${icon('gear', 14)}<span>视图创建向导</span><button aria-label="重置">${icon('reset', 14)}</button><button aria-label="关闭">${icon('x', 12)}</button></header>
  <div class="body">
    <ul class="steps">
      <li>${icon('cube', 14)}<span class="on">部件</span></li>
      <li>${icon('opts', 14)}<span>选项</span></li>
      <li>${icon('orient', 14)}<span>方向</span></li>
      <li>${icon('layout', 14)}<span>布局</span></li>
    </ul>
    <div class="page">
      <div class="intro"><span>选择部件或装配用作视图的基础</span>${icon('cube', 40)}</div>
      <div class="panel">
        <div class="head">部件${fold}</div>
        <div class="inner">
          <div class="pick"><span class="text">${icon('tick', 13)}选择部件</span><button aria-label="选择部件">${icon('cube', 20)}</button></div>
          <div class="sub">
            <div class="head">已加载的部件${fold}</div>
            <nx-list-box class="one" lined items="托架_钢材_图纸.prt|托架_钢材_图纸1.prt|托架_钢材_图纸dwg.prt" selected="2" thumb="3 2 0"></nx-list-box>
          </div>
          <div class="sub">
            <div class="head">最近访问的部件${fold}</div>
            <nx-list-box class="two" items="托架_钢材_图纸dwg.prt|托架_钢材.prt|托架_钢材_导入dwg.prt|铜托架__dwg.prt|托架_钢材_dwg_dwg.prt" selected="0" thumb="0 1 1"></nx-list-box>
          </div>
          <div class="open">打开<button aria-label="打开">${icon('openf')}</button></div>
        </div>
      </div>
    </div>
  </div>
  <footer><button disabled>&lt; 上一步</button><button>下一步 &gt;</button><button class="go">完成</button><button>取消</button></footer>
`);

define('nx-status-bar', `
  :host { display: flex; align-items: center; justify-content: space-between; height: 21px; background: #fff; padding: 0 53px 2px 3px; font-size: 11px; border-bottom: 1px solid #999; }
  div { display: flex; gap: 4px; }
`, `<span>选择部件</span><div>${icon('scr2')}${icon('screen')}</div>`);

define('win-task-bar', `
  :host { display: flex; height: 40px; background: #26282b; color: #f2f2f2; position: relative; }
  .start { width: 47px; display: flex; align-items: center; padding-left: 14px; }
  .search { width: 55px; }
  .tasks { flex: 1; display: flex; min-width: 0; }
  .task { flex: 1; min-width: 0; display: flex; align-items: center; gap: 4px; padding: 0 0 0 4px; margin-right: 8px; border-bottom: 3px solid #6cb4ee; white-space: nowrap; }
  .task.on { flex: 1 1 8px; background: #4d4f52; margin: 0; padding: 0 0 0 9px; }
  .tray { width: 239px; display: flex; align-items: center; gap: 8px; padding: 0 22px 0 13px; }
  .clock { display: flex; flex-direction: column; align-items: center; line-height: 20px; font-size: 12px; margin-left: 12px; }
  .bell { margin-left: auto; }
  .mark { position: absolute; right: 17px; top: 7px; font: 18px/24px "Noto Sans CJK SC", sans-serif; font-weight: 300; color: #ffffffc8; white-space: nowrap; }
`, () => `
  <button class="start" aria-label="开始">${icon('win', 19)}</button>
  <button class="start search" aria-label="搜索">${icon('lens', 19)}</button>
  <div class="tasks">${[
    ['tfolder', '002'], ['edge', 'ug工程制图怎...'], ['ne', 'NoteExpress...'], ['matlab', 'MATLAB R20...'], ['word', 'Word'], ['pdf', '基于有限元仿...'],
    ['ppt', '答辩PPT - Po...'], ['ppt', '李忠翔中期PP...'], ['ppt', '组会_2022.6....'], ['edt', 'ANSYS Electr...'], ['xm', '断路器故障诊断'], ['nx', '专业CNC培训...']
  ].map(([n, x]) => `<button class="task${n === 'nx' ? ' on' : ''}">${icon(n)}<span>${x}</span></button>`).join('')}</div>
  <div class="tray">${icon('tup')}${icon('vol')}<b>中</b>${icon('ime')}<span class="clock"><span>11:40:11</span><span>2022/7/4</span></span><span class="bell">${icon('bell')}</span></div>
  <span class="mark">CSDN @千山万寻</span>
`);

define('note-callout', `
  :host { display: block; background: #fff; border: 3px solid #f00; padding: 10px 31px 34px 32px; font: 400 48px/66px "Noto Sans CJK SC", sans-serif; color: #000; text-align: justify; }
`, '<slot></slot>');

define('nx-app', `
  :host { display: flex; flex-direction: column; height: 100vh; position: relative; overflow: hidden; }
  main { flex: 1; display: flex; min-height: 0; }
  .work { flex: 1; min-width: 0; position: relative; border: 0 solid #999; border-width: 0 2px 2px 1px; overflow: hidden; }
  nx-drawing-sheet { height: 100%; }
  nx-view-wizard { position: absolute; left: 0; top: 0; }
  .arrows { position: absolute; left: 0; top: 0; pointer-events: none; }
  note-callout { position: absolute; }
  .n1 { left: 994px; top: 226px; width: 333px; }
  .n2 { left: 72px; top: 543px; width: 477px; }
`, `
  <nx-title-bar></nx-title-bar>
  <nx-tab-bar></nx-tab-bar>
  <nx-ribbon></nx-ribbon>
  <nx-selection-bar></nx-selection-bar>
  <main>
    <nx-resource-rail></nx-resource-rail>
    <nx-part-navigator></nx-part-navigator>
    <div class="work">
      <nx-drawing-sheet></nx-drawing-sheet>
      <nx-view-wizard></nx-view-wizard>
    </div>
  </main>
  <nx-status-bar></nx-status-bar>
  <win-task-bar></win-task-bar>
  <note-callout class="n1">文件名，看这里也行</note-callout>
  <note-callout class="n2">选择刚才命名的文件（上一张图）</note-callout>
  <svg class="arrows" width="1200" height="700" aria-hidden="true">
    <g stroke="#f00" fill="#f00"><path d="M45 365L102 132M429 530L540 436" stroke-width="4"/><path d="M108 107L88 130l26 6zM557 421l-28 7 17 20z" stroke="none"/></g>
    <g stroke="#c00000" fill="#c00000"><path d="M565 641L1153 47" stroke-width="6"/><path d="M1171 29l-28 10 19 18z" stroke="none"/></g>
  </svg>
`);
</script>
</body>
</html>
